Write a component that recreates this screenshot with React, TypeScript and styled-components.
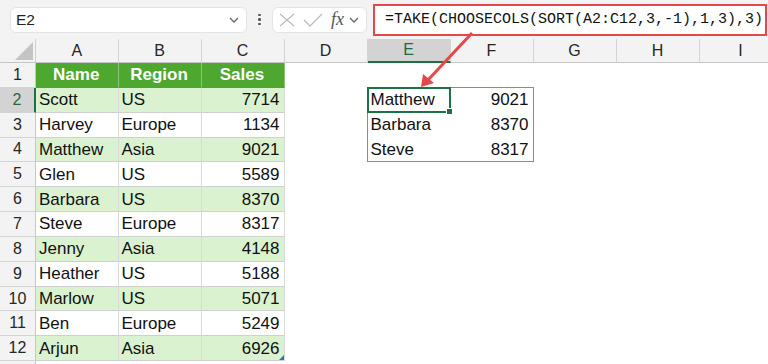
import styled, { createGlobalStyle } from "styled-components";

const GlobalStyle = createGlobalStyle`
  body {
    margin: 0;
    background: #ffffff;
    overflow: hidden;
    font-family: "Liberation Sans", Arial, sans-serif;
  }
`;

type Row = [string, string, string];

const data: Row[] = [
  ["Scott", "US", "7714"],
  ["Harvey", "Europe", "1134"],
  ["Matthew", "Asia", "9021"],
  ["Glen", "US", "5589"],
  ["Barbara", "US", "8370"],
  ["Steve", "Europe", "8317"],
  ["Jenny", "Asia", "4148"],
  ["Heather", "US", "5188"],
  ["Marlow", "US", "5071"],
  ["Ben", "Europe", "5249"],
  ["Arjun", "Asia", "6926"],
];

const result: [string, string][] = [
  ["Matthew", "9021"],
  ["Barbara", "8370"],
  ["Steve", "8317"],
];

const columns = ["A", "B", "C", "D", "E", "F", "G", "H", "I"];

const App = () => {
  const rows = Array.from({ length: 13 }, (_, i) => i + 1);

  // grid row = sheet row + 1, grid column = column index + 2
  const renderCell = (row: number, colIdx: number) => {
    const pos = { $r: row + 1, $c: colIdx + 2 };
    if (colIdx < 3 && row <= 12) {
      if (row === 1) {
        const head = ["Name", "Region", "Sales"][colIdx];
        return (
          <Cell key={colIdx} {...pos} $kind="head" $align="center">
            {head}
          </Cell>
        );
      }
      const value = data[row - 2][colIdx];
      return (
        <Cell
          key={colIdx}
          {...pos}
          $kind={row % 2 === 0 ? "band" : "plain"}
          $align={colIdx === 2 ? "right" : "left"}
        >
          {value}
        </Cell>
      );
    }
    if ((colIdx === 4 || colIdx === 5) && row >= 2 && row <= 4) {
      const value = result[row - 2][colIdx - 4];
      return (
        <Cell key={colIdx} {...pos} $kind="empty" $align={colIdx === 5 ? "right" : "left"}>
          {value}
        </Cell>
      );
    }
    return <Cell key={colIdx} {...pos} $kind="empty" $align="left" />;
  };

  return (
    <Page>
      <GlobalStyle />
      <FormulaBar>
        <NameBox>
          <span>E2</span>
          <Chevron viewBox="0 0 10 6">
            <path d="M1 1 L5 5 L9 1" />
          </Chevron>
        </NameBox>
        <Dots>
          <i />
          <i />
          <i />
        </Dots>
        <FxBox>
          <svg width="16" height="14" viewBox="0 0 16 14">
            <path d="M1 1 L15 13 M15 1 L1 13" stroke="#bdbdbd" strokeWidth="1.3" fill="none" />
          </svg>
          <svg width="20" height="14" viewBox="0 0 20 14">
            <path d="M1 7 L7 13 L19 1" stroke="#bdbdbd" strokeWidth="1.3" fill="none" />
          </svg>
          <Fx>fx</Fx>
          <Chevron viewBox="0 0 10 6">
            <path d="M1 1 L5 5 L9 1" />
          </Chevron>
        </FxBox>
        <FormulaInput>=TAKE(CHOOSECOLS(SORT(A2:C12,3,-1),1,3),3)</FormulaInput>
      </FormulaBar>

      <Sheet>
        <Corner>
          <svg width="18" height="18" viewBox="0 0 18 18">
            <path d="M18 0 L18 18 L0 18 Z" fill="#c4c4c4" />
          </svg>
        </Corner>
        {columns.map((c, ci) => (
          <ColHeader key={c} $c={ci + 2} $selected={c === "E"}>
            {c}
          </ColHeader>
        ))}
        {rows.map((r) => (
          <RowGroup key={r}>
            <RowHeader $r={r + 1} $selected={r === 2}>
              {r <= 12 ? r : ""}
            </RowHeader>
            {columns.map((_, ci) => renderCell(r, ci))}
          </RowGroup>
        ))}
        <Spill />
        <Selection>
          <FillHandle />
        </Selection>
        <TableHandle />
      </Sheet>

      <Arrow width="768" height="364" viewBox="0 0 768 364">
        <path d="M472 33 L428 80" stroke="#e8474a" strokeWidth="3" fill="none" />
        <path d="M421 87 L423 74 L434 83 Z" fill="#e8474a" />
      </Arrow>
    </Page>
  );
};

export default App;

const Page = styled.div`
  position: relative;
  width: 768px;
  height: 364px;
  overflow: hidden;
  background: #ffffff;
`;

const FormulaBar = styled.div`
  display: flex;
  align-items: center;
  height: 39px;
  padding-left: 10px;
  background: #f3f3f3;
  box-sizing: border-box;
`;

const NameBox = styled.div`
  display: flex;
  align-items: center;
  justify-content: space-between;
  width: 237px;
  height: 26px;
  box-sizing: border-box;
  padding: 0 7px 0 5px;
  background: #ffffff;
  border: 1px solid #e4e4e4;
  border-radius: 6px;
  font-size: 15.5px;
  color: #1f1f1f;
`;

const Chevron = styled.svg`
  width: 10px;
  height: 6px;
  fill: none;
  stroke: #666666;
  stroke-width: 1.3;
`;

const Dots = styled.div`
  display: flex;
  flex-direction: column;
  align-items: center;
  gap: 2px;
  width: 25px;

  i {
    width: 2.5px;
    height: 2.5px;
    border-radius: 50%;
    background: #555555;
  }
`;

const FxBox = styled.div`
  display: flex;
  align-items: center;
  gap: 8px;
  width: 95px;
  height: 26px;
  box-sizing: border-box;
  padding: 0 4px 0 6px;
  background: #ffffff;
  border: 1px solid #e4e4e4;
  border-radius: 6px;
`;

const Fx = styled.span`
  font-family: "Liberation Serif", "Times New Roman", serif;
  font-style: italic;
  font-size: 18px;
  color: #555555;
  margin-right: -3px;
`;

const FormulaInput = styled.div`
  flex: 1;
  display: flex;
  align-items: center;
  height: 32px;
  margin: 0 1px 0 6px;
  padding-left: 10px;
  box-sizing: border-box;
  background: #ffffff;
  border: 2px solid #e8474a;
  font-family: "Liberation Mono", "DejaVu Sans Mono", monospace;
  font-size: 15px;
  color: #111111;
  white-space: nowrap;
`;

const Sheet = styled.div`
  position: relative;
  display: grid;
  grid-template-columns: 36px 82.5px repeat(8, 83px);
  grid-template-rows: 24px repeat(13, 24.85px);
  width: 783px;
`;

const RowGroup = styled.div`
  display: contents;
`;

const Corner = styled.div`
  grid-row: 1;
  grid-column: 1;
  display: flex;
  align-items: flex-end;
  justify-content: flex-end;
  padding: 0 2px 2px 0;
  background: #f3f3f3;
  border-right: 1px solid #cfcfcf;
  border-bottom: 1px solid #c6c6c6;
`;

const ColHeader = styled.div<{ $c: number; $selected: boolean }>`
  grid-row: 1;
  grid-column: ${(p) => p.$c};
  display: flex;
  align-items: center;
  justify-content: center;
  font-size: 16px;
  color: ${(p) => (p.$selected ? "#1e6b3c" : "#262626")};
  background: ${(p) => (p.$selected ? "#d3d3d3" : "#f3f3f3")};
  border-right: 1px solid #d4d4d4;
  border-bottom: ${(p) => (p.$selected ? "2px solid #1e7145" : "1px solid #c6c6c6")};
`;

const RowHeader = styled.div<{ $r: number; $selected: boolean }>`
  grid-row: ${(p) => p.$r};
  grid-column: 1;
  display: flex;
  align-items: center;
  justify-content: center;
  font-size: 16px;
  color: ${(p) => (p.$selected ? "#1e6b3c" : "#262626")};
  background: ${(p) => (p.$selected ? "#d3d3d3" : "#f3f3f3")};
  border-right: ${(p) => (p.$selected ? "2px solid #1e7145" : "1px solid #c6c6c6")};
  border-bottom: 1px solid #d4d4d4;
`;

type CellKind = "head" | "band" | "plain" | "empty";

const cellBg: Record<CellKind, string> = {
  head: "#4ea72e",
  band: "#daf2d0",
  plain: "#ffffff",
  empty: "#ffffff",
};

const Cell = styled.div<{
  $r: number;
  $c: number;
  $kind: CellKind;
  $align: "left" | "right" | "center";
}>`
  grid-row: ${(p) => p.$r};
  grid-column: ${(p) => p.$c};
  display: flex;
  align-items: center;
  justify-content: ${(p) =>
    p.$align === "right" ? "flex-end" : p.$align === "center" ? "center" : "flex-start"};
  padding: 1px 4px 0 3px;
  overflow: hidden;
  white-space: nowrap;
  font-size: 17px;
  font-weight: ${(p) => (p.$kind === "head" ? 700 : 400)};
  color: ${(p) => (p.$kind === "head" ? "#ffffff" : "#111111")};
  background: ${(p) => cellBg[p.$kind]};
  border-right: 1px solid
    ${(p) => (p.$kind === "empty" ? "transparent" : p.$kind === "head" ? "#8cc477" : "#d9d9d9")};
  border-bottom: 1px solid
    ${(p) => (p.$kind === "empty" ? "transparent" : p.$kind === "head" ? "#4ea72e" : "#d0d0d0")};
`;

const Spill = styled.div`
  grid-column: 6 / 8;
  grid-row: 3 / 6;
  z-index: 1;
  margin: -1px 0 0 -1px;
  border: 1px solid #5f95d8;
  pointer-events: none;
`;

const Selection = styled.div`
  position: relative;
  grid-column: 6 / 7;
  grid-row: 3 / 4;
  z-index: 2;
  margin: -1px 0 0 -1px;
  border: 2px solid #1e7145;
  pointer-events: none;
`;

const FillHandle = styled.div`
  position: absolute;
  right: -4px;
  bottom: -4px;
  width: 5px;
  height: 5px;
  background: #1e7145;
  border: 1px solid #ffffff;
`;

const TableHandle = styled.div`
  grid-column: 4 / 5;
  grid-row: 13 / 14;
  z-index: 1;
  align-self: end;
  justify-self: end;
  width: 0;
  height: 0;
  margin: 0 1px 1px 0;
  border-left: 5px solid transparent;
  border-bottom: 5px solid #2f6fb8;
`;

const Arrow = styled.svg`
  position: absolute;
  left: 0;
  top: 0;
  pointer-events: none;
`;
